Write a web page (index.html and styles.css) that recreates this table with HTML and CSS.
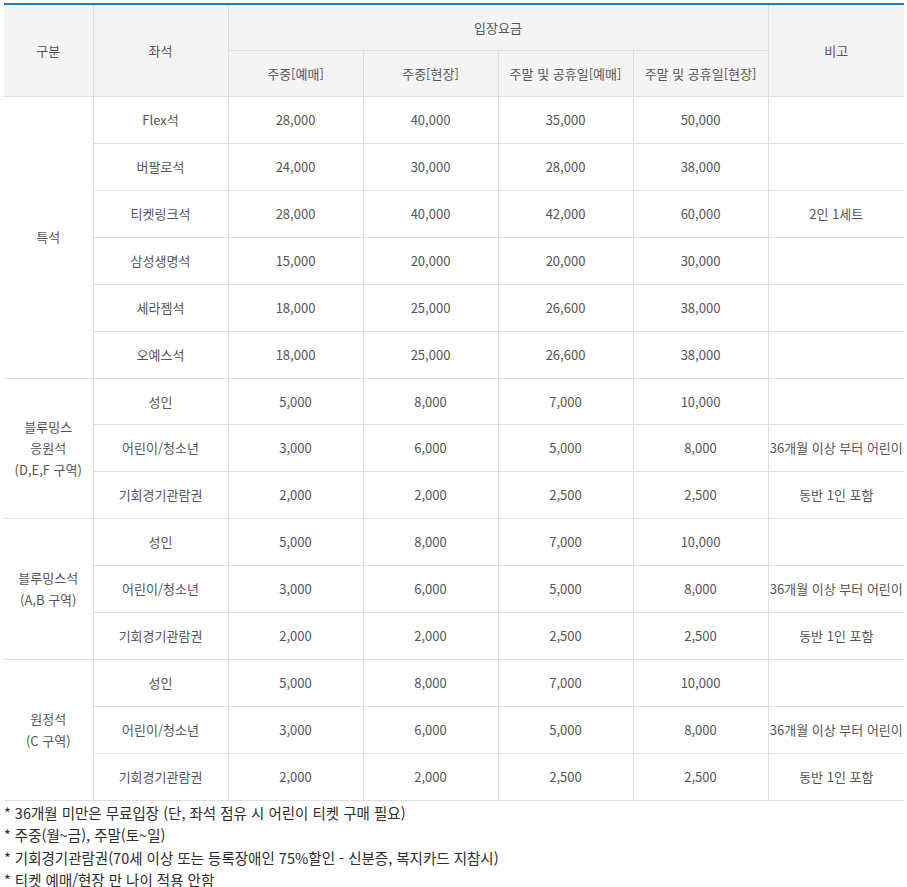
FILE: index.html
```html
<!DOCTYPE html>
<html lang="ko">
<head>
<meta charset="utf-8">
<title>입장요금</title>
<link rel="stylesheet" href="styles.css">
</head>
<body>
<div class="wrap">
  <table class="price">
    <colgroup>
      <col class="c-kind"><col class="c-seat"><col class="c-p"><col class="c-p"><col class="c-p"><col class="c-p"><col class="c-note">
    </colgroup>
    <thead>
      <tr>
        <th rowspan="2" class="first">구분</th>
        <th rowspan="2">좌석</th>
        <th colspan="4">입장요금</th>
        <th rowspan="2" class="last">비고</th>
      </tr>
      <tr>
        <th>주중[예매]</th>
        <th>주중[현장]</th>
        <th>주말 및 공휴일[예매]</th>
        <th>주말 및 공휴일[현장]</th>
      </tr>
    </thead>
    <tbody>
      <tr><td rowspan="6" class="first">특석</td><td>Flex석</td><td>28,000</td><td>40,000</td><td>35,000</td><td>50,000</td><td class="last"></td></tr>
      <tr><td>버팔로석</td><td>24,000</td><td>30,000</td><td>28,000</td><td>38,000</td><td class="last"></td></tr>
      <tr><td>티켓링크석</td><td>28,000</td><td>40,000</td><td>42,000</td><td>60,000</td><td class="last">2인 1세트</td></tr>
      <tr><td>삼성생명석</td><td>15,000</td><td>20,000</td><td>20,000</td><td>30,000</td><td class="last"></td></tr>
      <tr><td>세라젬석</td><td>18,000</td><td>25,000</td><td>26,600</td><td>38,000</td><td class="last"></td></tr>
      <tr><td>오예스석</td><td>18,000</td><td>25,000</td><td>26,600</td><td>38,000</td><td class="last"></td></tr>

      <tr><td rowspan="3" class="first">블루밍스<br>응원석<br>(D,E,F 구역)</td><td>성인</td><td>5,000</td><td>8,000</td><td>7,000</td><td>10,000</td><td class="last"></td></tr>
      <tr><td>어린이/청소년</td><td>3,000</td><td>6,000</td><td>5,000</td><td>8,000</td><td class="last">36개월 이상 부터 어린이</td></tr>
      <tr><td>기회경기관람권</td><td>2,000</td><td>2,000</td><td>2,500</td><td>2,500</td><td class="last">동반 1인 포함</td></tr>

      <tr><td rowspan="3" class="first">블루밍스석<br>(A,B 구역)</td><td>성인</td><td>5,000</td><td>8,000</td><td>7,000</td><td>10,000</td><td class="last"></td></tr>
      <tr><td>어린이/청소년</td><td>3,000</td><td>6,000</td><td>5,000</td><td>8,000</td><td class="last">36개월 이상 부터 어린이</td></tr>
      <tr><td>기회경기관람권</td><td>2,000</td><td>2,000</td><td>2,500</td><td>2,500</td><td class="last">동반 1인 포함</td></tr>

      <tr><td rowspan="3" class="first">원정석<br>(C 구역)</td><td>성인</td><td>5,000</td><td>8,000</td><td>7,000</td><td>10,000</td><td class="last"></td></tr>
      <tr><td>어린이/청소년</td><td>3,000</td><td>6,000</td><td>5,000</td><td>8,000</td><td class="last">36개월 이상 부터 어린이</td></tr>
      <tr><td>기회경기관람권</td><td>2,000</td><td>2,000</td><td>2,500</td><td>2,500</td><td class="last">동반 1인 포함</td></tr>
    </tbody>
  </table>
  <ul class="notes">
    <li>* 36개월 미만은 무료입장 (단, 좌석 점유 시 어린이 티켓 구매 필요)</li>
    <li>* 주중(월~금), 주말(토~일)</li>
    <li>* 기회경기관람권(70세 이상 또는 등록장애인 75%할인 - 신분증, 복지카드 지참시)</li>
    <li>* 티켓 예매/현장 만 나이 적용 안함</li>
  </ul>
</div>
</body>
</html>
```

FILE: styles.css
```css
html, body {
  margin: 0;
  padding: 0;
  background: #fff;
}
body {
  font-family: "Noto Sans CJK KR", "Noto Sans", sans-serif;
}
.wrap {
  padding: 3px 0 0 4px;
  width: 900px;
}
.price {
  width: 900px;
  border-collapse: collapse;
  table-layout: fixed;
  border-top: 2px solid #1b7dbd;
  font-size: 13px;
  color: #555;
}
.c-kind { width: 89px; }
.c-seat { width: 135px; }
.c-p { width: 135px; }
.c-note { width: 136px; }
.price th,
.price td {
  text-align: center;
  vertical-align: middle;
  font-weight: normal;
  padding: 12px 0;
  line-height: 21.92px;
  border: 1px solid #dedede;
  white-space: nowrap;
}
.price .first {
  border-left: none;
}
.price .last {
  border-right: none;
}
.price th {
  background: #f4f4f4;
  line-height: 21px;
}
.notes {
  list-style: none;
  margin: 0;
  padding: 1px 0 0 0;
  font-size: 14.5px;
  line-height: 22.4px;
  color: #2b2b2b;
}
```
